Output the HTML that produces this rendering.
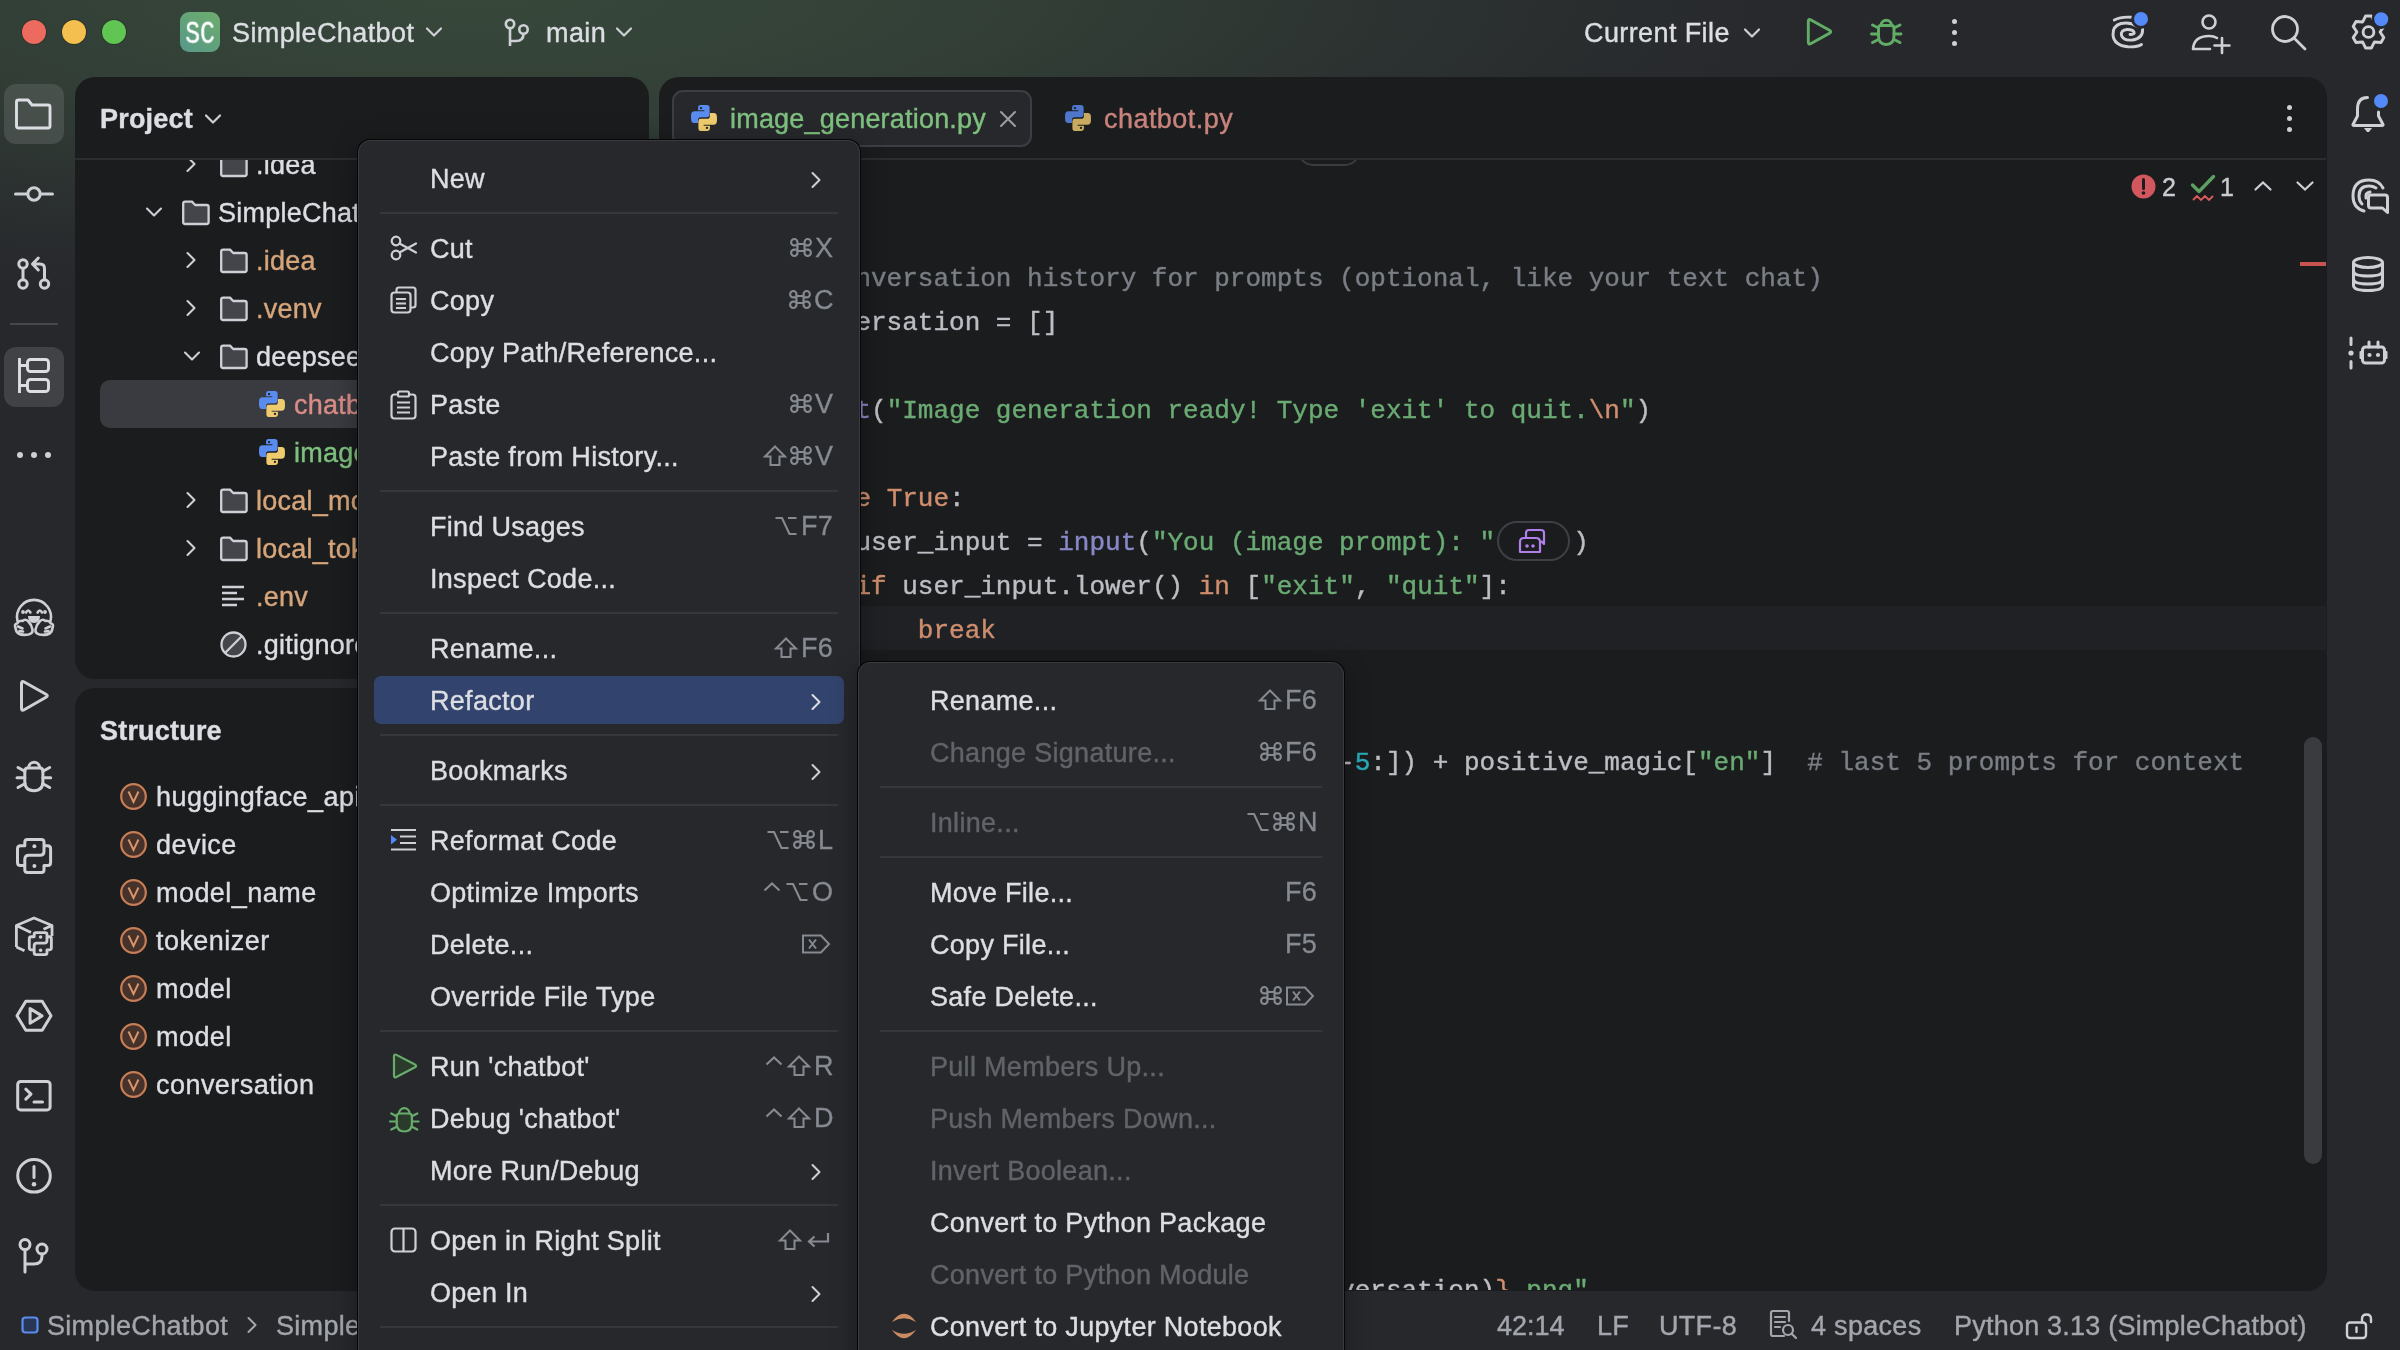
<!DOCTYPE html>
<html><head><meta charset="utf-8">
<style>
*{margin:0;padding:0;box-sizing:border-box}
html,body{width:2400px;height:1350px;overflow:hidden;background:#27282C}
body{position:relative;font-family:"Liberation Sans",sans-serif;color:#DFE1E5;font-size:27px}
.a{position:absolute}
.t{position:absolute;white-space:pre;line-height:1;will-change:transform;-webkit-text-stroke:0.4px currentColor}
.mono{font-family:"Liberation Mono",monospace}
svg{position:absolute;overflow:visible}
.panel{position:absolute;background:#1B1C1E;border-radius:20px;overflow:hidden}
.clip{position:absolute;overflow:hidden}
</style></head>
<body>

<div class="a" style="left:0;top:0;width:1800px;height:700px;background:radial-gradient(ellipse 1350px 300px at 480px 0px,rgba(74,110,76,0.46) 0%,rgba(74,110,76,0.32) 40%,rgba(74,110,76,0.10) 75%,rgba(74,110,76,0) 100%)"></div>
<div class="a" style="left:22px;top:20px;width:24px;height:24px;border-radius:50%;background:#EC6A5E;box-shadow:0 0 0 1px rgba(0,0,0,0.2)"></div>
<div class="a" style="left:62px;top:20px;width:24px;height:24px;border-radius:50%;background:#F4BF4F;box-shadow:0 0 0 1px rgba(0,0,0,0.2)"></div>
<div class="a" style="left:102px;top:20px;width:24px;height:24px;border-radius:50%;background:#61C554;box-shadow:0 0 0 1px rgba(0,0,0,0.2)"></div>
<div class="a" style="left:180px;top:12px;width:40px;height:40px;border-radius:9px;background:linear-gradient(35deg,#56998A 0%,#62A27A 50%,#6EAE6E 100%)"></div>
<div class="t mono" style="left:180px;top:21px;width:40px;text-align:center;font-size:28px;font-weight:400;color:#fff;letter-spacing:0px;transform:scale(0.88,1.14)">SC</div>
<div class="t" style="left:232px;top:19.8px;font-size:27px;font-weight:400;color:#DCDEE3;letter-spacing:0.4px;">SimpleChatbot</div>
<svg style="left:426px;top:27px;" width="16" height="10" viewBox="0 0 16 10"><path d="M1 1.5 L8.0 8.5 L15 1.5" fill="none" stroke="#CED0D6" stroke-width="2.2" stroke-linecap="round" stroke-linejoin="round"/></svg>
<svg style="left:504px;top:18px;" width="26" height="30" viewBox="0 0 26 30"><g fill="none" stroke="#CED0D6" stroke-width="2.6"><circle cx="6" cy="6" r="4.2"/><circle cx="19.5" cy="11.5" r="4.2"/><path d="M6 10.2 V28 M6 23 H12 Q19.5 23 19.5 15.7"/></g></svg>
<div class="t" style="left:546px;top:19.8px;font-size:27px;font-weight:400;color:#DCDEE3;letter-spacing:0.4px;">main</div>
<svg style="left:616px;top:27px;" width="16" height="10" viewBox="0 0 16 10"><path d="M1 1.5 L8.0 8.5 L15 1.5" fill="none" stroke="#CED0D6" stroke-width="2.2" stroke-linecap="round" stroke-linejoin="round"/></svg>
<div class="t" style="left:1584px;top:19.8px;font-size:27px;font-weight:400;color:#DCDEE3;letter-spacing:0.4px;">Current File</div>
<svg style="left:1744px;top:28px;" width="16" height="10" viewBox="0 0 16 10"><path d="M1 1.5 L8.0 8.5 L15 1.5" fill="none" stroke="#CED0D6" stroke-width="2.2" stroke-linecap="round" stroke-linejoin="round"/></svg>
<svg style="left:1804px;top:16px;" width="32" height="32" viewBox="0 0 32 32"><path d="M4.3 5.5 Q4.3 2.5 7 4 L25.5 14.2 Q28 15.7 25.5 17.2 L7 27.6 Q4.3 29.1 4.3 26.1 Z" fill="none" stroke="#62AD66" stroke-width="2.9" stroke-linejoin="round"/></svg>
<svg style="left:1868px;top:14px;" width="36" height="36" viewBox="0 0 36 36"><g fill="none" stroke="#62AD66" stroke-width="2.9" stroke-linecap="round" stroke-linejoin="round"><path d="M13 11.5 A5.3 5.3 0 0 1 23.6 11.5"/><path d="M10.5 14 Q10.5 11.5 13 11.5 H23.5 Q26 11.5 26 14 V22 Q26 30.5 18.25 30.5 Q10.5 30.5 10.5 22 Z"/><path d="M3.5 20 H10.5 M26 20 H33 M4.5 11 L10.5 14 M32 11 L26 14 M4.5 28.5 L10.5 25.5 M32 28.5 L26 25.5"/></g></svg>
<div class="a" style="left:1951.5px;top:18.5px;width:5px;height:5px;border-radius:50%;background:#CED0D6"></div>
<div class="a" style="left:1951.5px;top:29.5px;width:5px;height:5px;border-radius:50%;background:#CED0D6"></div>
<div class="a" style="left:1951.5px;top:40.5px;width:5px;height:5px;border-radius:50%;background:#CED0D6"></div>
<svg style="left:2108px;top:12px;" width="44" height="40" viewBox="0 0 44 40"><g fill="none" stroke="#CED0D6" stroke-width="2.9" stroke-linecap="round"><path d="M28.5 14 Q22 9.8 13 11.5 Q4.5 14 5 23 Q6 33.5 20 34.8 Q29 35.3 33.5 32.5"/><path d="M34.6 17 Q35 26.5 24.5 28 Q15.5 29 13.5 23.5 Q12.5 18 19 17.5 Q24.5 17.3 26 20 Q27 22.5 22 22.5"/><path d="M6.3 8 Q13 4.5 23.5 5.3"/></g><circle cx="33" cy="7" r="8.4" fill="#548AF7" stroke="#27282C" stroke-width="2.8"/></svg>
<svg style="left:2190px;top:12px;" width="42" height="42" viewBox="0 0 42 42"><g fill="none" stroke="#CED0D6" stroke-width="2.6" stroke-linecap="round"><circle cx="19" cy="10" r="6.5"/><path d="M3 37 Q4 24 19 24 Q24 24 27 26 M3 37 H20 M32 26 V41 M24.5 33.5 H39.5"/></g></svg>
<svg style="left:2268px;top:12px;" width="42" height="42" viewBox="0 0 42 42"><g fill="none" stroke="#CED0D6" stroke-width="2.8" stroke-linecap="round"><circle cx="17" cy="17" r="12.5"/><path d="M26 26 L37 37"/></g></svg>
<svg style="left:2348px;top:10px;" width="44" height="44" viewBox="0 0 44 44"><g fill="none" stroke="#CED0D6" stroke-width="2.9" stroke-linejoin="round"><path d="M23.33 38.05 L17.67 38.05 L14.70 32.05 L8.01 32.48 L5.18 27.57 L8.90 22.00 L5.18 16.43 L8.01 11.52 L14.70 11.95 L17.67 5.95 L23.33 5.95 L26.30 11.95 L32.99 11.52 L35.82 16.43 L32.10 22.00 L35.82 27.57 L32.99 32.48 L26.30 32.05 Z"/><circle cx="20.5" cy="22" r="5.4"/></g><circle cx="33.2" cy="9.2" r="8.4" fill="#548AF7" stroke="#27282C" stroke-width="2.8"/></svg>
<div class="a" style="left:4px;top:84px;width:60px;height:60px;border-radius:12px;background:rgba(125,128,128,0.30)"></div>
<svg style="left:14px;top:98px;" width="40" height="34" viewBox="0 0 40 34"><path d="M2.5 4 Q2.5 2 4.5 2 H14 L18 7 H34 Q36 7 36 9 V28 Q36 30 34 30 H4.5 Q2.5 30 2.5 28 Z" fill="none" stroke="#DCDEE3" stroke-width="2.9" stroke-linejoin="round"/></svg>
<svg style="left:12px;top:182px;" width="44" height="24" viewBox="0 0 44 24"><g fill="none" stroke="#CED0D6" stroke-width="3.0" stroke-linecap="round"><circle cx="22" cy="12" r="6.2"/><path d="M3.5 12 H15.8 M28.2 12 H40.5"/></g></svg>
<svg style="left:12px;top:254px;" width="44" height="40" viewBox="0 0 44 40"><g fill="none" stroke="#CED0D6" stroke-width="3.0" stroke-linecap="round" stroke-linejoin="round"><circle cx="11" cy="10" r="4.2"/><circle cx="11" cy="30" r="4.2"/><circle cx="32.5" cy="30" r="4.2"/><path d="M11 14.2 V25.8 M32.5 25.8 V14.5 Q32.5 10 28 10 H20.5 M26.3 4 L20.5 10 L26.3 16"/></g></svg>
<div class="a" style="left:10px;top:323px;width:48px;height:2px;background:#45484C"></div>
<div class="a" style="left:4px;top:347px;width:60px;height:60px;border-radius:12px;background:rgba(125,128,128,0.30)"></div>
<svg style="left:14px;top:354px;" width="40" height="44" viewBox="0 0 40 44"><g fill="none" stroke="#DCDEE3" stroke-width="2.9"><path d="M5.5 4 V39"/><rect x="13.5" y="5.5" width="21" height="12" rx="3"/><rect x="13.5" y="25.5" width="21" height="12" rx="3"/><path d="M5.5 11.5 H13.5 M5.5 31.5 H13.5"/></g></svg>
<div class="a" style="left:17px;top:452px;width:6px;height:6px;border-radius:50%;background:#CED0D6"></div>
<div class="a" style="left:31px;top:452px;width:6px;height:6px;border-radius:50%;background:#CED0D6"></div>
<div class="a" style="left:45px;top:452px;width:6px;height:6px;border-radius:50%;background:#CED0D6"></div>
<svg style="left:12px;top:594px;" width="44" height="44" viewBox="0 0 44 44"><g fill="none" stroke="#CED0D6" stroke-width="2.6" stroke-linecap="round" stroke-linejoin="round"><path d="M5.5 27 A17 17 0 1 1 38.5 27"/><path d="M14 18.5 Q16.2 14.5 18.4 18.5 M25.6 18.5 Q27.8 14.5 30 18.5"/><path d="M3.5 34 Q2 30 5 29.5 Q7.5 26 10.5 27 Q13 24.5 16 27 Q19.5 30.5 20.5 35.5 Q21 39.5 16.5 40.5 Q10 41.5 6.5 39.5 Q4 38 3.5 34 Z M6 32.5 L10.5 34.5 M7.5 37 L11 37.5"/><path d="M40.5 34 Q42 30 39 29.5 Q36.5 26 33.5 27 Q31 24.5 28 27 Q24.5 30.5 23.5 35.5 Q23 39.5 27.5 40.5 Q34 41.5 37.5 39.5 Q40 38 40.5 34 Z M38 32.5 L33.5 34.5 M36.5 37 L33 37.5"/></g><circle cx="11" cy="18" r="1.9" fill="#CED0D6"/><circle cx="33" cy="18" r="1.9" fill="#CED0D6"/><path d="M16 22 H28 Q28 29 22 29 Q16 29 16 22 Z" fill="#CED0D6"/></svg>
<svg style="left:16px;top:676px;" width="36" height="40" viewBox="0 0 36 40"><path d="M5.5 7.5 Q5.5 4.5 8.2 6 L30 18.3 Q32.6 19.8 30 21.3 L8.2 33.8 Q5.5 35.3 5.5 32.3 Z" fill="none" stroke="#CED0D6" stroke-width="3.0" stroke-linejoin="round"/></svg>
<svg style="left:12px;top:754px;" width="44" height="40" viewBox="0 0 44 40"><g fill="none" stroke="#CED0D6" stroke-width="3.0" stroke-linecap="round" stroke-linejoin="round"><path d="M16.7 13 A5.5 5.5 0 0 1 27.6 13"/><path d="M12.8 17 Q12.8 14 15.8 14 H27.9 Q30.9 14 30.9 17 V27.6 Q30.9 36.7 21.85 36.7 Q12.8 36.7 12.8 27.6 Z"/><path d="M5 23.8 H12.8 M30.9 23.8 H38.7 M6 13.5 L12.8 17.3 M37.7 13.5 L30.9 17.3 M6 33.5 L12.8 29.7 M37.7 33.5 L30.9 29.7"/></g></svg>
<svg style="left:16px;top:838px;" width="36" height="36" viewBox="0 0 36 36"><path d="M8.8 7.7 V4.3 Q8.8 1.5 11.6 1.5 H25.2 Q28 1.5 28 4.3 V7.7 H31.6 Q34.6 7.7 34.6 10.7 V24.4 Q34.6 27.4 31.6 27.4 H28 V31.7 Q28 34.5 25.2 34.5 H11.6 Q8.8 34.5 8.8 31.7 V27.4 H4.5 Q1.5 27.4 1.5 24.4 V10.7 Q1.5 7.7 4.5 7.7 Z M8.8 27.4 V21.4 Q8.8 17.3 12.8 17.3 H24 Q28 17.3 28 13.3 V7.7" fill="none" stroke="#CED0D6" stroke-width="3.0" stroke-linejoin="round"/><circle cx="18.4" cy="8.2" r="2" fill="#CED0D6"/><circle cx="18.4" cy="28" r="2" fill="#CED0D6"/></svg>
<svg style="left:14px;top:914px;" width="44" height="44" viewBox="0 0 44 44"><g fill="none" stroke="#CED0D6" stroke-width="2.8" stroke-linejoin="round"><path d="M2.4 33 V11.5 L20 4 L38 11.5 V22 M2.4 11.5 L17 18.5 M38 11.5 L29.5 15.3 M2.4 33 L10.5 36.8"/></g><g transform="translate(14.3 17.6) scale(0.667)"><path d="M8.8 7.7 V4.3 Q8.8 1.5 11.6 1.5 H25.2 Q28 1.5 28 4.3 V7.7 H31.6 Q34.6 7.7 34.6 10.7 V24.4 Q34.6 27.4 31.6 27.4 H28 V31.7 Q28 34.5 25.2 34.5 H11.6 Q8.8 34.5 8.8 31.7 V27.4 H4.5 Q1.5 27.4 1.5 24.4 V10.7 Q1.5 7.7 4.5 7.7 Z M8.8 27.4 V21.4 Q8.8 17.3 12.8 17.3 H24 Q28 17.3 28 13.3 V7.7" fill="#2B2D30" stroke="#CED0D6" stroke-width="4.3" stroke-linejoin="round"/><circle cx="18.4" cy="8.2" r="2.6" fill="#CED0D6"/><circle cx="18.4" cy="28" r="2.6" fill="#CED0D6"/></g></svg>
<svg style="left:12px;top:994px;" width="44" height="44" viewBox="0 0 44 44"><g fill="none" stroke="#CED0D6" stroke-width="3.0" stroke-linejoin="round"><path d="M13.8 7.3 H30.2 L39 21.8 L30.2 36.3 H13.8 L5 21.8 Z"/><path d="M18.1 14.6 V29.2 L30 21.9 Z"/></g></svg>
<svg style="left:14px;top:1076px;" width="42" height="40" viewBox="0 0 42 40"><g fill="none" stroke="#CED0D6" stroke-width="3.0" stroke-linecap="round" stroke-linejoin="round"><rect x="3.7" y="5.5" width="32.4" height="28.4" rx="3"/><path d="M11.8 13.2 L17 18.2 L11.8 23.2 M20 26 H28.5"/></g></svg>
<svg style="left:14px;top:1155px;" width="40" height="42" viewBox="0 0 40 42"><g fill="none" stroke="#CED0D6" stroke-width="3.0" stroke-linecap="round"><circle cx="20" cy="20.8" r="16.3"/><path d="M20 11.5 V22.5"/></g><circle cx="20" cy="29.3" r="2.3" fill="#CED0D6"/></svg>
<svg style="left:14px;top:1234px;" width="40" height="42" viewBox="0 0 40 42"><g fill="none" stroke="#CED0D6" stroke-width="3.0" stroke-linecap="round"><circle cx="11" cy="10.6" r="5"/><circle cx="28" cy="15" r="5"/><path d="M11 15.6 V38 M11 30 H20 Q28 30 28 22 V20"/></g></svg>
<svg style="left:2346px;top:92px;" width="46" height="44" viewBox="0 0 46 44"><g fill="none" stroke="#CED0D6" stroke-width="3.0" stroke-linejoin="round" stroke-linecap="round"><path d="M21.5 5.5 Q11.5 5.5 11.5 17 V24 L7 32.5 Q6.5 33.5 8 33.5 H36 Q37.5 33.5 37 32.5 L32.5 24 V20"/></g><path d="M18 36 H26 L23 40 H21 Z" fill="#CED0D6"/><circle cx="35" cy="9" r="7" fill="#548AF7"/></svg>
<svg style="left:2350px;top:174px;" width="42" height="44" viewBox="0 0 42 44"><g fill="none" stroke="#CED0D6" stroke-width="3.0" stroke-linecap="round" stroke-linejoin="round"><path d="M14 37 Q3 34 3 22 Q3 6 19 6 Q29 6 33 14"/><path d="M12 30 Q9 27 9 22 Q9 12 19 12 Q23 12 26 14"/><path d="M16 24 Q15 19 20 18"/><path d="M21 21 H35 Q37.5 21 37.5 23.5 V38.5 L32.5 34 H21 Q18.5 34 18.5 31.5 V23.5 Q18.5 21 21 21 Z"/></g></svg>
<svg style="left:2348px;top:254px;" width="40" height="40" viewBox="0 0 40 40"><g fill="none" stroke="#CED0D6" stroke-width="3.0"><ellipse cx="20" cy="8.5" rx="14.5" ry="5"/><path d="M5.5 8.5 V31.5 Q5.5 36.5 20 36.5 Q34.5 36.5 34.5 31.5 V8.5 M5.5 17 Q5.5 22 20 22 Q34.5 22 34.5 17 M5.5 25 Q5.5 30 20 30 Q34.5 30 34.5 25"/></g></svg>
<svg style="left:2348px;top:334px;" width="44" height="40" viewBox="0 0 44 40"><g fill="none" stroke="#CED0D6" stroke-width="3.0" stroke-linecap="round"><path d="M3 4 V10.5 M3 27.5 V34"/><rect x="14.5" y="13" width="22" height="16" rx="3"/><path d="M21 13 V8 M30 13 V8"/></g><rect x="11.5" y="17" width="3.5" height="8" rx="1" fill="#CED0D6"/><rect x="36" y="17" width="3.5" height="8" rx="1" fill="#CED0D6"/><circle cx="3" cy="19" r="2.6" fill="#CED0D6"/><circle cx="21.5" cy="21" r="2.1" fill="#CED0D6"/><circle cx="30" cy="21" r="2.1" fill="#CED0D6"/></svg>
<div class="panel" style="left:75px;top:77px;width:574px;height:602px"></div>
<div class="t" style="left:100px;top:106.3px;font-size:27px;font-weight:700;color:#DCDEE3;letter-spacing:0.2px;">Project</div>
<svg style="left:205px;top:114px;" width="16" height="10" viewBox="0 0 16 10"><path d="M1 1.5 L8.0 8.5 L15 1.5" fill="none" stroke="#CED0D6" stroke-width="2.2" stroke-linecap="round" stroke-linejoin="round"/></svg>
<div class="a" style="left:75px;top:158px;width:574px;height:2px;background:#2B2D30"></div>
<div class="clip" style="left:75px;top:160px;width:574px;height:519px">
<div class="a" style="left:25px;top:220px;width:600px;height:48px;border-radius:10px;background:#393B40"></div>
<svg style="left:111px;top:-4px" width="10" height="16" viewBox="0 0 10 16"><path d="M1.5 1 L8.5 8 L1.5 15" fill="none" stroke="#CED0D6" stroke-width="2.1" stroke-linecap="round" stroke-linejoin="round"/></svg>
<svg style="left:144px;top:-8px" width="30" height="26" viewBox="0 0 30 26"><path d="M2.2 3.5 Q2.2 1.6 4.1 1.6 H11 L14.2 5 H25.6 Q27.6 5 27.6 7 V22 Q27.6 24 25.6 24 H4.2 Q2.2 24 2.2 22 Z" fill="#43454A" stroke="#CED0D6" stroke-width="2.3" stroke-linejoin="round"/></svg>
<div class="t" style="left:181px;top:-8.2px;color:#DCDEE3;letter-spacing:0.25px;font-weight:400">.idea</div>
<svg style="left:71px;top:47px" width="16" height="10" viewBox="0 0 16 10"><path d="M1 1.5 L8 8.5 L15 1.5" fill="none" stroke="#CED0D6" stroke-width="2.1" stroke-linecap="round" stroke-linejoin="round"/></svg>
<svg style="left:106px;top:40px" width="30" height="26" viewBox="0 0 30 26"><path d="M2.2 3.5 Q2.2 1.6 4.1 1.6 H11 L14.2 5 H25.6 Q27.6 5 27.6 7 V22 Q27.6 24 25.6 24 H4.2 Q2.2 24 2.2 22 Z" fill="#43454A" stroke="#CED0D6" stroke-width="2.3" stroke-linejoin="round"/></svg>
<div class="t" style="left:143px;top:39.8px;color:#DCDEE3;letter-spacing:0.25px;font-weight:400">SimpleChatbot</div>
<svg style="left:111px;top:92px" width="10" height="16" viewBox="0 0 10 16"><path d="M1.5 1 L8.5 8 L1.5 15" fill="none" stroke="#CED0D6" stroke-width="2.1" stroke-linecap="round" stroke-linejoin="round"/></svg>
<svg style="left:144px;top:88px" width="30" height="26" viewBox="0 0 30 26"><path d="M2.2 3.5 Q2.2 1.6 4.1 1.6 H11 L14.2 5 H25.6 Q27.6 5 27.6 7 V22 Q27.6 24 25.6 24 H4.2 Q2.2 24 2.2 22 Z" fill="#43454A" stroke="#CED0D6" stroke-width="2.3" stroke-linejoin="round"/></svg>
<div class="t" style="left:181px;top:87.8px;color:#D6A57A;letter-spacing:0.25px;font-weight:400">.idea</div>
<svg style="left:111px;top:140px" width="10" height="16" viewBox="0 0 10 16"><path d="M1.5 1 L8.5 8 L1.5 15" fill="none" stroke="#CED0D6" stroke-width="2.1" stroke-linecap="round" stroke-linejoin="round"/></svg>
<svg style="left:144px;top:136px" width="30" height="26" viewBox="0 0 30 26"><path d="M2.2 3.5 Q2.2 1.6 4.1 1.6 H11 L14.2 5 H25.6 Q27.6 5 27.6 7 V22 Q27.6 24 25.6 24 H4.2 Q2.2 24 2.2 22 Z" fill="#43454A" stroke="#CED0D6" stroke-width="2.3" stroke-linejoin="round"/></svg>
<div class="t" style="left:181px;top:135.8px;color:#D6A57A;letter-spacing:0.25px;font-weight:400">.venv</div>
<svg style="left:109px;top:191px" width="16" height="10" viewBox="0 0 16 10"><path d="M1 1.5 L8 8.5 L15 1.5" fill="none" stroke="#CED0D6" stroke-width="2.1" stroke-linecap="round" stroke-linejoin="round"/></svg>
<svg style="left:144px;top:184px" width="30" height="26" viewBox="0 0 30 26"><path d="M2.2 3.5 Q2.2 1.6 4.1 1.6 H11 L14.2 5 H25.6 Q27.6 5 27.6 7 V22 Q27.6 24 25.6 24 H4.2 Q2.2 24 2.2 22 Z" fill="#43454A" stroke="#CED0D6" stroke-width="2.3" stroke-linejoin="round"/></svg>
<div class="t" style="left:181px;top:183.8px;color:#DCDEE3;letter-spacing:0.25px;font-weight:400">deepseek</div>
<svg style="left:183px;top:230px" width="28" height="28" viewBox="0 0 16 16"><path d="M6 0.6 H9.6 Q11.2 0.6 11.2 2.2 V6.2 Q11.2 7.6 9.8 7.6 H6.2 Q4.6 7.6 4.6 9.2 V10.8 H2.4 Q0.6 10.8 0.6 8.4 V6.6 Q0.6 4.2 2.6 4.2 H8.2 V3.6 H4.6 V2.0 Q4.6 0.6 6 0.6 Z" fill="#5A8CF0"/><path d="M6 0.6 H9.6 Q11.2 0.6 11.2 2.2 V6.2 Q11.2 7.6 9.8 7.6 H6.2 Q4.6 7.6 4.6 9.2 V10.8 H2.4 Q0.6 10.8 0.6 8.4 V6.6 Q0.6 4.2 2.6 4.2 H8.2 V3.6 H4.6 V2.0 Q4.6 0.6 6 0.6 Z" fill="#EECB6E" transform="rotate(180 8 8)"/><circle cx="6.3" cy="2.3" r="0.65" fill="#1B1C1E"/><circle cx="9.7" cy="13.7" r="0.65" fill="#1B1C1E"/></svg>
<div class="t" style="left:219px;top:231.8px;color:#DA8C86;letter-spacing:0.25px;font-weight:400">chatbot.py</div>
<svg style="left:183px;top:278px" width="28" height="28" viewBox="0 0 16 16"><path d="M6 0.6 H9.6 Q11.2 0.6 11.2 2.2 V6.2 Q11.2 7.6 9.8 7.6 H6.2 Q4.6 7.6 4.6 9.2 V10.8 H2.4 Q0.6 10.8 0.6 8.4 V6.6 Q0.6 4.2 2.6 4.2 H8.2 V3.6 H4.6 V2.0 Q4.6 0.6 6 0.6 Z" fill="#5A8CF0"/><path d="M6 0.6 H9.6 Q11.2 0.6 11.2 2.2 V6.2 Q11.2 7.6 9.8 7.6 H6.2 Q4.6 7.6 4.6 9.2 V10.8 H2.4 Q0.6 10.8 0.6 8.4 V6.6 Q0.6 4.2 2.6 4.2 H8.2 V3.6 H4.6 V2.0 Q4.6 0.6 6 0.6 Z" fill="#EECB6E" transform="rotate(180 8 8)"/><circle cx="6.3" cy="2.3" r="0.65" fill="#1B1C1E"/><circle cx="9.7" cy="13.7" r="0.65" fill="#1B1C1E"/></svg>
<div class="t" style="left:219px;top:279.8px;color:#7EC07F;letter-spacing:0.25px;font-weight:400">image_generation.py</div>
<svg style="left:111px;top:332px" width="10" height="16" viewBox="0 0 10 16"><path d="M1.5 1 L8.5 8 L1.5 15" fill="none" stroke="#CED0D6" stroke-width="2.1" stroke-linecap="round" stroke-linejoin="round"/></svg>
<svg style="left:144px;top:328px" width="30" height="26" viewBox="0 0 30 26"><path d="M2.2 3.5 Q2.2 1.6 4.1 1.6 H11 L14.2 5 H25.6 Q27.6 5 27.6 7 V22 Q27.6 24 25.6 24 H4.2 Q2.2 24 2.2 22 Z" fill="#43454A" stroke="#CED0D6" stroke-width="2.3" stroke-linejoin="round"/></svg>
<div class="t" style="left:181px;top:327.8px;color:#D6A57A;letter-spacing:0.25px;font-weight:400">local_model</div>
<svg style="left:111px;top:380px" width="10" height="16" viewBox="0 0 10 16"><path d="M1.5 1 L8.5 8 L1.5 15" fill="none" stroke="#CED0D6" stroke-width="2.1" stroke-linecap="round" stroke-linejoin="round"/></svg>
<svg style="left:144px;top:376px" width="30" height="26" viewBox="0 0 30 26"><path d="M2.2 3.5 Q2.2 1.6 4.1 1.6 H11 L14.2 5 H25.6 Q27.6 5 27.6 7 V22 Q27.6 24 25.6 24 H4.2 Q2.2 24 2.2 22 Z" fill="#43454A" stroke="#CED0D6" stroke-width="2.3" stroke-linejoin="round"/></svg>
<div class="t" style="left:181px;top:375.8px;color:#D6A57A;letter-spacing:0.25px;font-weight:400">local_tokenizer</div>
<svg style="left:145px;top:422px" width="28" height="28" viewBox="0 0 28 28"><g stroke="#CED0D6" stroke-width="2.3"><path d="M2 5 H24 M2 11 H17 M2 17 H24 M2 23 H17"/></g></svg>
<div class="t" style="left:181px;top:423.8px;color:#D6A57A;letter-spacing:0.25px;font-weight:400">.env</div>
<svg style="left:144px;top:470px" width="30" height="30" viewBox="0 0 30 30"><circle cx="14.5" cy="14.5" r="12" fill="#43454A" stroke="#CED0D6" stroke-width="2.3"/><path d="M6 23 L23 6" stroke="#CED0D6" stroke-width="2.3"/></svg>
<div class="t" style="left:181px;top:471.8px;color:#DCDEE3;letter-spacing:0.25px;font-weight:400">.gitignore</div>
</div>
<div class="panel" style="left:75px;top:688px;width:574px;height:603px"></div>
<div class="t" style="left:100px;top:717.8px;font-size:27px;font-weight:700;color:#DCDEE3;letter-spacing:0.2px;">Structure</div>
<svg style="left:119px;top:782px;" width="30" height="30" viewBox="0 0 30 30"><circle cx="14.5" cy="14.5" r="12.3" fill="#45322A" stroke="#C77D55" stroke-width="2.2"/><path d="M9.5 9.5 L14.5 20 L19.5 9.5" fill="none" stroke="#D9956A" stroke-width="2"/></svg>
<div class="t" style="left:156px;top:783.8px;font-size:27px;font-weight:400;color:#DCDEE3;letter-spacing:0.45px;">huggingface_api_key</div>
<svg style="left:119px;top:830px;" width="30" height="30" viewBox="0 0 30 30"><circle cx="14.5" cy="14.5" r="12.3" fill="#45322A" stroke="#C77D55" stroke-width="2.2"/><path d="M9.5 9.5 L14.5 20 L19.5 9.5" fill="none" stroke="#D9956A" stroke-width="2"/></svg>
<div class="t" style="left:156px;top:831.8px;font-size:27px;font-weight:400;color:#DCDEE3;letter-spacing:0.45px;">device</div>
<svg style="left:119px;top:878px;" width="30" height="30" viewBox="0 0 30 30"><circle cx="14.5" cy="14.5" r="12.3" fill="#45322A" stroke="#C77D55" stroke-width="2.2"/><path d="M9.5 9.5 L14.5 20 L19.5 9.5" fill="none" stroke="#D9956A" stroke-width="2"/></svg>
<div class="t" style="left:156px;top:879.8px;font-size:27px;font-weight:400;color:#DCDEE3;letter-spacing:0.45px;">model_name</div>
<svg style="left:119px;top:926px;" width="30" height="30" viewBox="0 0 30 30"><circle cx="14.5" cy="14.5" r="12.3" fill="#45322A" stroke="#C77D55" stroke-width="2.2"/><path d="M9.5 9.5 L14.5 20 L19.5 9.5" fill="none" stroke="#D9956A" stroke-width="2"/></svg>
<div class="t" style="left:156px;top:927.8px;font-size:27px;font-weight:400;color:#DCDEE3;letter-spacing:0.45px;">tokenizer</div>
<svg style="left:119px;top:974px;" width="30" height="30" viewBox="0 0 30 30"><circle cx="14.5" cy="14.5" r="12.3" fill="#45322A" stroke="#C77D55" stroke-width="2.2"/><path d="M9.5 9.5 L14.5 20 L19.5 9.5" fill="none" stroke="#D9956A" stroke-width="2"/></svg>
<div class="t" style="left:156px;top:975.8px;font-size:27px;font-weight:400;color:#DCDEE3;letter-spacing:0.45px;">model</div>
<svg style="left:119px;top:1022px;" width="30" height="30" viewBox="0 0 30 30"><circle cx="14.5" cy="14.5" r="12.3" fill="#45322A" stroke="#C77D55" stroke-width="2.2"/><path d="M9.5 9.5 L14.5 20 L19.5 9.5" fill="none" stroke="#D9956A" stroke-width="2"/></svg>
<div class="t" style="left:156px;top:1023.8px;font-size:27px;font-weight:400;color:#DCDEE3;letter-spacing:0.45px;">model</div>
<svg style="left:119px;top:1070px;" width="30" height="30" viewBox="0 0 30 30"><circle cx="14.5" cy="14.5" r="12.3" fill="#45322A" stroke="#C77D55" stroke-width="2.2"/><path d="M9.5 9.5 L14.5 20 L19.5 9.5" fill="none" stroke="#D9956A" stroke-width="2"/></svg>
<div class="t" style="left:156px;top:1071.8px;font-size:27px;font-weight:400;color:#DCDEE3;letter-spacing:0.45px;">conversation</div>
<div class="panel" style="left:659px;top:77px;width:1668px;height:1214px"></div>
<div class="a" style="left:672px;top:90px;width:360px;height:57px;border-radius:11px;background:#27282C;border:2px solid #3C3E43"></div>
<svg style="left:690px;top:104px" width="28" height="28" viewBox="0 0 16 16"><path d="M6 0.6 H9.6 Q11.2 0.6 11.2 2.2 V6.2 Q11.2 7.6 9.8 7.6 H6.2 Q4.6 7.6 4.6 9.2 V10.8 H2.4 Q0.6 10.8 0.6 8.4 V6.6 Q0.6 4.2 2.6 4.2 H8.2 V3.6 H4.6 V2.0 Q4.6 0.6 6 0.6 Z" fill="#5A8CF0"/><path d="M6 0.6 H9.6 Q11.2 0.6 11.2 2.2 V6.2 Q11.2 7.6 9.8 7.6 H6.2 Q4.6 7.6 4.6 9.2 V10.8 H2.4 Q0.6 10.8 0.6 8.4 V6.6 Q0.6 4.2 2.6 4.2 H8.2 V3.6 H4.6 V2.0 Q4.6 0.6 6 0.6 Z" fill="#EECB6E" transform="rotate(180 8 8)"/><circle cx="6.3" cy="2.3" r="0.65" fill="#1B1C1E"/><circle cx="9.7" cy="13.7" r="0.65" fill="#1B1C1E"/></svg>
<div class="t" style="left:730px;top:105.8px;font-size:27px;font-weight:400;color:#7EC07F;letter-spacing:0.2px;">image_generation.py</div>
<svg style="left:999px;top:110px;" width="18" height="18" viewBox="0 0 18 18"><path d="M2 2 L16 16 M16 2 L2 16" stroke="#9A9DA3" stroke-width="2" stroke-linecap="round"/></svg>
<div class="a" style="left:1064px;top:104px;width:28px;height:28px;opacity:0.82">
<svg style="left:0px;top:0px" width="28" height="28" viewBox="0 0 16 16"><path d="M6 0.6 H9.6 Q11.2 0.6 11.2 2.2 V6.2 Q11.2 7.6 9.8 7.6 H6.2 Q4.6 7.6 4.6 9.2 V10.8 H2.4 Q0.6 10.8 0.6 8.4 V6.6 Q0.6 4.2 2.6 4.2 H8.2 V3.6 H4.6 V2.0 Q4.6 0.6 6 0.6 Z" fill="#5A8CF0"/><path d="M6 0.6 H9.6 Q11.2 0.6 11.2 2.2 V6.2 Q11.2 7.6 9.8 7.6 H6.2 Q4.6 7.6 4.6 9.2 V10.8 H2.4 Q0.6 10.8 0.6 8.4 V6.6 Q0.6 4.2 2.6 4.2 H8.2 V3.6 H4.6 V2.0 Q4.6 0.6 6 0.6 Z" fill="#EECB6E" transform="rotate(180 8 8)"/><circle cx="6.3" cy="2.3" r="0.65" fill="#1B1C1E"/><circle cx="9.7" cy="13.7" r="0.65" fill="#1B1C1E"/></svg>
</div>
<div class="t" style="left:1104px;top:105.8px;font-size:27px;font-weight:400;color:#C8847C;letter-spacing:0.45px;">chatbot.py</div>
<div class="a" style="left:2287px;top:104.5px;width:5px;height:5px;border-radius:50%;background:#CED0D6"></div>
<div class="a" style="left:2287px;top:115.5px;width:5px;height:5px;border-radius:50%;background:#CED0D6"></div>
<div class="a" style="left:2287px;top:126.5px;width:5px;height:5px;border-radius:50%;background:#CED0D6"></div>
<div class="a" style="left:659px;top:158px;width:1667px;height:2px;background:#2B2D30"></div>
<div class="clip" style="left:1290px;top:160px;width:80px;height:10px"><div class="a" style="left:8px;top:-24px;width:62px;height:30px;border-radius:15px;border:2px solid #3A3C40;background:#1B1C1E"></div></div>
<div class="a" style="left:659px;top:158px;width:1667px;height:2px;background:#2B2D30"></div>
<div class="a" style="left:659px;top:606px;width:1667px;height:44px;background:#202125"></div>
<div class="clip" style="left:659px;top:160px;width:1640px;height:1130px">
<div class="a" style="left:-659px;top:-160px;width:2400px;height:1350px">
<div class="t mono" style="left:793.2px;top:266.0px;font-size:26px;color:#BCBEC4"><span style="color:#7A7E85"># Conversation history for prompts (optional, like your text chat)</span></div>
<div class="t mono" style="left:793.2px;top:310.0px;font-size:26px;color:#BCBEC4"><span style="color:#BCBEC4">conversation = []</span></div>
<div class="t mono" style="left:793.2px;top:398.0px;font-size:26px;color:#BCBEC4"><span style="color:#8888C6">print</span><span style="color:#BCBEC4">(</span><span style="color:#6AAB73">&quot;Image generation ready! Type &#x27;exit&#x27; to quit.</span><span style="color:#CF8E6D">\n</span><span style="color:#6AAB73">&quot;</span><span style="color:#BCBEC4">)</span></div>
<div class="t mono" style="left:793.2px;top:486.0px;font-size:26px;color:#BCBEC4"><span style="color:#CF8E6D">while </span><span style="color:#CF8E6D">True</span><span style="color:#BCBEC4">:</span></div>
<div class="t mono" style="left:793.2px;top:530.0px;font-size:26px;color:#BCBEC4"><span style="color:#BCBEC4">    user_input = </span><span style="color:#8888C6">input</span><span style="color:#BCBEC4">(</span><span style="color:#6AAB73">&quot;You (image prompt): &quot;</span><span style="color:#BCBEC4">     </span><span style="color:#BCBEC4">)</span></div>
<div class="t mono" style="left:793.2px;top:574.0px;font-size:26px;color:#BCBEC4"><span style="color:#BCBEC4">    </span><span style="color:#CF8E6D">if</span><span style="color:#BCBEC4"> user_input.lower() </span><span style="color:#CF8E6D">in</span><span style="color:#BCBEC4"> [</span><span style="color:#6AAB73">&quot;exit&quot;</span><span style="color:#BCBEC4">, </span><span style="color:#6AAB73">&quot;quit&quot;</span><span style="color:#BCBEC4">]:</span></div>
<div class="t mono" style="left:793.2px;top:618.0px;font-size:26px;color:#BCBEC4"><span style="color:#BCBEC4">        </span><span style="color:#CF8E6D">break</span></div>
<div class="t mono" style="left:793.2px;top:706.0px;font-size:26px;color:#BCBEC4"><span style="color:#BCBEC4">    conversation.append(user_input)</span></div>
<div class="t mono" style="left:793.2px;top:750.0px;font-size:26px;color:#BCBEC4"><span style="color:#BCBEC4">    prompt = </span><span style="color:#6AAB73">&quot; &quot;</span><span style="color:#BCBEC4">.join(conversation[-</span><span style="color:#2AACB8">5</span><span style="color:#BCBEC4">:]) + positive_magic[</span><span style="color:#6AAB73">&quot;en&quot;</span><span style="color:#BCBEC4">]  </span><span style="color:#7A7E85"># last 5 prompts for context</span></div>
<div class="t mono" style="left:793.2px;top:1278.0px;font-size:26px;color:#BCBEC4"><span style="color:#BCBEC4">        filename = </span><span style="color:#6AAB73">f&quot;image_</span><span style="color:#CF8E6D">{</span><span style="color:#8888C6">len</span><span style="color:#BCBEC4">(conversation)</span><span style="color:#CF8E6D">}</span><span style="color:#6AAB73">.png&quot;</span></div>
</div></div>
<div class="a" style="left:1497px;top:521px;width:73px;height:40px;border-radius:20px;border:2px solid #3E4045"></div>
<svg style="left:1517px;top:527px;" width="30" height="28" viewBox="0 0 30 28"><g fill="none" stroke="#B07FEA" stroke-width="2.2" stroke-linejoin="round"><path d="M3 25 V15 Q3 11 7 11 H19 Q23 11 23 15 V25 Z"/><path d="M9 11 V6 Q9 3 12 3 H24 Q27 3 27 6 V17 L24 14"/></g><circle cx="10" cy="19" r="1.8" fill="#B07FEA"/><circle cx="16" cy="19" r="1.8" fill="#B07FEA"/></svg>
<svg style="left:2131px;top:174px;" width="26" height="26" viewBox="0 0 26 26"><circle cx="12.5" cy="12.5" r="12" fill="#D2575E"/><path d="M12.5 5.5 V14.5" stroke="#1B1C1E" stroke-width="3" stroke-linecap="round"/><circle cx="12.5" cy="19" r="1.8" fill="#1B1C1E"/></svg>
<div class="t" style="left:2162px;top:174.7px;font-size:25px;font-weight:400;color:#C9CCD1;letter-spacing:0px;">2</div>
<svg style="left:2190px;top:172px;" width="28" height="30" viewBox="0 0 28 30"><path d="M2.5 13 L9 19.5 L23.5 4.5" fill="none" stroke="#5E9F62" stroke-width="3.4" stroke-linecap="round" stroke-linejoin="round"/><path d="M3 28 L7 24 L11 28 L15 24 L19 28 L23 24" fill="none" stroke="#DB5C5C" stroke-width="1.8"/></svg>
<div class="t" style="left:2220px;top:174.7px;font-size:25px;font-weight:400;color:#C9CCD1;letter-spacing:0px;">1</div>
<svg style="left:2254px;top:181px;" width="18" height="10" viewBox="0 0 18 10"><path d="M1.5 8.5 L9 1.5 L16.5 8.5" fill="none" stroke="#CED0D6" stroke-width="2.2" stroke-linecap="round"/></svg>
<svg style="left:2296px;top:181px;" width="18" height="10" viewBox="0 0 18 10"><path d="M1.5 1.5 L9 8.5 L16.5 1.5" fill="none" stroke="#CED0D6" stroke-width="2.2" stroke-linecap="round"/></svg>
<div class="a" style="left:2300px;top:262px;width:26px;height:4px;background:#C75450"></div>
<div class="a" style="left:2304px;top:737px;width:18px;height:427px;border-radius:9px;background:#3A3B3F"></div>
<svg style="left:21px;top:1316px;" width="18" height="18" viewBox="0 0 18 18"><rect x="1.5" y="1.5" width="15" height="15" rx="3" fill="#2A3656" stroke="#5A8CF0" stroke-width="2.2"/></svg>
<div class="t" style="left:47px;top:1312.8px;font-size:27px;font-weight:400;color:#A3A6AD;letter-spacing:0.3px;">SimpleChatbot</div>
<svg style="left:247px;top:1317px;" width="10" height="16" viewBox="0 0 10 16"><path d="M1.5 1 L8.5 8.0 L1.5 15" fill="none" stroke="#A3A6AD" stroke-width="2" stroke-linecap="round" stroke-linejoin="round"/></svg>
<div class="t" style="left:276px;top:1312.8px;font-size:27px;font-weight:400;color:#A3A6AD;letter-spacing:0.3px;">SimpleChatbot</div>
<div class="t" style="left:1497px;top:1312.8px;font-size:27px;font-weight:400;color:#A3A6AD;letter-spacing:0px;">42:14</div>
<div class="t" style="left:1597px;top:1312.8px;font-size:27px;font-weight:400;color:#A3A6AD;letter-spacing:0.3px;">LF</div>
<div class="t" style="left:1659px;top:1312.8px;font-size:27px;font-weight:400;color:#A3A6AD;letter-spacing:0.3px;">UTF-8</div>
<svg style="left:1768px;top:1309px;" width="32" height="32" viewBox="0 0 32 32"><g fill="none" stroke="#A3A6AD" stroke-width="2.2" stroke-linecap="round"><path d="M16 27 H5 Q3 27 3 25 V4 Q3 2 5 2 H19 Q21 2 21 4 V12"/><path d="M7 8 H17 M7 13 H17 M7 18 H12"/><circle cx="20" cy="21" r="5"/><path d="M23.5 24.5 L28 29"/></g></svg>
<div class="t" style="left:1811px;top:1312.8px;font-size:27px;font-weight:400;color:#A3A6AD;letter-spacing:0.3px;">4 spaces</div>
<div class="t" style="left:1954px;top:1312.8px;font-size:27px;font-weight:400;color:#A3A6AD;letter-spacing:0.22px;">Python 3.13 (SimpleChatbot)</div>
<svg style="left:2343px;top:1308px;" width="34" height="32" viewBox="0 0 34 32"><g fill="none" stroke="#CED0D6" stroke-width="2.4" stroke-linejoin="round" stroke-linecap="round"><rect x="4" y="14.5" width="19" height="15.5" rx="3"/><path d="M19 14.5 V11 Q19 6.5 23.5 6.5 Q28 6.5 28 11 V14"/><path d="M13.5 19.5 V24"/></g></svg>
<div class="a" style="left:357px;top:139px;width:504px;height:1261px;border-radius:13px;background:#060607;box-shadow:0 6px 24px rgba(0,0,0,0.35)"></div>
<div class="a" style="left:358px;top:140px;width:502px;height:1259px;border-radius:12px;background:#27282C;border:1px solid #3A3B40"></div>
<div class="a" style="left:374px;top:676px;width:470px;height:48px;border-radius:7px;background:#32436D"></div>
<div class="t" style="left:430px;top:165.8px;font-size:27px;font-weight:400;color:#DCDEE3;letter-spacing:0.3px;">New</div>
<svg style="left:811px;top:171.5px;" width="10" height="16" viewBox="0 0 10 16"><path d="M1.5 1 L8.5 8.0 L1.5 15" fill="none" stroke="#CED0D6" stroke-width="2.0" stroke-linecap="round" stroke-linejoin="round"/></svg>
<div class="a" style="left:380px;top:212px;width:458px;height:2px;background:#35373B"></div>
<div class="t" style="left:430px;top:235.8px;font-size:27px;font-weight:400;color:#DCDEE3;letter-spacing:0.3px;">Cut</div>
<div class="a" style="right:1566.5px;top:237px;height:22px;display:flex;gap:3px;align-items:center;color:#868A91;white-space:pre;will-change:transform"><svg style="position:static;display:block" width="22" height="22" viewBox="0 0 22 22"><g fill="none" stroke="#868A91" stroke-width="2.1"><path d="M7.5 7 H14.5 V14 H7.5 Z"/><path d="M7.5 7 V5.2 A3.2 3.2 0 1 0 4.3 8.4 H7.5"/><path d="M14.5 7 V5.2 A3.2 3.2 0 1 1 17.7 8.4 H14.5"/><path d="M7.5 14 V15.8 A3.2 3.2 0 1 1 4.3 12.6 H7.5"/><path d="M14.5 14 V15.8 A3.2 3.2 0 1 0 17.7 12.6 H14.5"/></g></svg><span style="display:block;font-size:27px;line-height:22px;letter-spacing:0.3px;-webkit-text-stroke:0.3px currentColor">X</span></div>
<svg style="left:390px;top:235px;" width="28" height="26" viewBox="0 0 28 26"><g fill="none" stroke="#CED0D6" stroke-width="2.2" stroke-linecap="round"><circle cx="6" cy="6" r="4.3"/><circle cx="6" cy="20" r="4.3"/><path d="M9.5 8.5 L26 17.5 M9.5 17.5 L26 8.5"/></g></svg>
<div class="t" style="left:430px;top:287.8px;font-size:27px;font-weight:400;color:#DCDEE3;letter-spacing:0.3px;">Copy</div>
<div class="a" style="right:1566.5px;top:289px;height:22px;display:flex;gap:3px;align-items:center;color:#868A91;white-space:pre;will-change:transform"><svg style="position:static;display:block" width="22" height="22" viewBox="0 0 22 22"><g fill="none" stroke="#868A91" stroke-width="2.1"><path d="M7.5 7 H14.5 V14 H7.5 Z"/><path d="M7.5 7 V5.2 A3.2 3.2 0 1 0 4.3 8.4 H7.5"/><path d="M14.5 7 V5.2 A3.2 3.2 0 1 1 17.7 8.4 H14.5"/><path d="M7.5 14 V15.8 A3.2 3.2 0 1 1 4.3 12.6 H7.5"/><path d="M14.5 14 V15.8 A3.2 3.2 0 1 0 17.7 12.6 H14.5"/></g></svg><span style="display:block;font-size:27px;line-height:22px;letter-spacing:0.3px;-webkit-text-stroke:0.3px currentColor">C</span></div>
<svg style="left:390px;top:286px;" width="28" height="28" viewBox="0 0 28 28"><g fill="none" stroke="#CED0D6" stroke-width="2.2" stroke-linejoin="round"><rect x="1.5" y="6.5" width="19" height="20" rx="3"/><path d="M6.5 6.5 V4 Q6.5 1.5 9 1.5 H23 Q25.5 1.5 25.5 4 V19 Q25.5 21.5 23 21.5 H20.5"/><path d="M6 13 H16 M6 17.5 H16 M6 22 H16"/></g></svg>
<div class="t" style="left:430px;top:339.8px;font-size:27px;font-weight:400;color:#DCDEE3;letter-spacing:0.3px;">Copy Path/Reference...</div>
<div class="t" style="left:430px;top:391.8px;font-size:27px;font-weight:400;color:#DCDEE3;letter-spacing:0.3px;">Paste</div>
<div class="a" style="right:1566.5px;top:393px;height:22px;display:flex;gap:3px;align-items:center;color:#868A91;white-space:pre;will-change:transform"><svg style="position:static;display:block" width="22" height="22" viewBox="0 0 22 22"><g fill="none" stroke="#868A91" stroke-width="2.1"><path d="M7.5 7 H14.5 V14 H7.5 Z"/><path d="M7.5 7 V5.2 A3.2 3.2 0 1 0 4.3 8.4 H7.5"/><path d="M14.5 7 V5.2 A3.2 3.2 0 1 1 17.7 8.4 H14.5"/><path d="M7.5 14 V15.8 A3.2 3.2 0 1 1 4.3 12.6 H7.5"/><path d="M14.5 14 V15.8 A3.2 3.2 0 1 0 17.7 12.6 H14.5"/></g></svg><span style="display:block;font-size:27px;line-height:22px;letter-spacing:0.3px;-webkit-text-stroke:0.3px currentColor">V</span></div>
<svg style="left:390px;top:390px;" width="28" height="30" viewBox="0 0 28 30"><g fill="none" stroke="#CED0D6" stroke-width="2.2" stroke-linejoin="round"><rect x="1.5" y="4.5" width="24" height="24" rx="3"/><rect x="8" y="1.5" width="11" height="5" rx="1.5" fill="#27282C"/><path d="M7 12.5 H20 M7 17.5 H20 M7 22.5 H20"/></g></svg>
<div class="t" style="left:430px;top:443.8px;font-size:27px;font-weight:400;color:#DCDEE3;letter-spacing:0.3px;">Paste from History...</div>
<div class="a" style="right:1566.5px;top:445px;height:22px;display:flex;gap:3px;align-items:center;color:#868A91;white-space:pre;will-change:transform"><svg style="position:static;display:block" width="24" height="22" viewBox="0 0 24 22"><path d="M12 1.5 L22 11.5 H16.5 V20 H7.5 V11.5 H2 Z" fill="none" stroke="#868A91" stroke-width="2" stroke-linejoin="miter"/></svg><svg style="position:static;display:block" width="22" height="22" viewBox="0 0 22 22"><g fill="none" stroke="#868A91" stroke-width="2.1"><path d="M7.5 7 H14.5 V14 H7.5 Z"/><path d="M7.5 7 V5.2 A3.2 3.2 0 1 0 4.3 8.4 H7.5"/><path d="M14.5 7 V5.2 A3.2 3.2 0 1 1 17.7 8.4 H14.5"/><path d="M7.5 14 V15.8 A3.2 3.2 0 1 1 4.3 12.6 H7.5"/><path d="M14.5 14 V15.8 A3.2 3.2 0 1 0 17.7 12.6 H14.5"/></g></svg><span style="display:block;font-size:27px;line-height:22px;letter-spacing:0.3px;-webkit-text-stroke:0.3px currentColor">V</span></div>
<div class="a" style="left:380px;top:490px;width:458px;height:2px;background:#35373B"></div>
<div class="t" style="left:430px;top:513.8px;font-size:27px;font-weight:400;color:#DCDEE3;letter-spacing:0.3px;">Find Usages</div>
<div class="a" style="right:1566.5px;top:515px;height:22px;display:flex;gap:3px;align-items:center;color:#868A91;white-space:pre;will-change:transform"><svg style="position:static;display:block" width="24" height="22" viewBox="0 0 24 22"><path d="M1.5 3 H8 L15.5 19 H22.5 M14 3 H22.5" fill="none" stroke="#868A91" stroke-width="2.1"/></svg><span style="display:block;font-size:27px;line-height:22px;letter-spacing:0.3px;-webkit-text-stroke:0.3px currentColor">F7</span></div>
<div class="t" style="left:430px;top:565.8px;font-size:27px;font-weight:400;color:#DCDEE3;letter-spacing:0.3px;">Inspect Code...</div>
<div class="a" style="left:380px;top:612px;width:458px;height:2px;background:#35373B"></div>
<div class="t" style="left:430px;top:635.8px;font-size:27px;font-weight:400;color:#DCDEE3;letter-spacing:0.3px;">Rename...</div>
<div class="a" style="right:1566.5px;top:637px;height:22px;display:flex;gap:3px;align-items:center;color:#868A91;white-space:pre;will-change:transform"><svg style="position:static;display:block" width="24" height="22" viewBox="0 0 24 22"><path d="M12 1.5 L22 11.5 H16.5 V20 H7.5 V11.5 H2 Z" fill="none" stroke="#868A91" stroke-width="2" stroke-linejoin="miter"/></svg><span style="display:block;font-size:27px;line-height:22px;letter-spacing:0.3px;-webkit-text-stroke:0.3px currentColor">F6</span></div>
<div class="t" style="left:430px;top:687.8px;font-size:27px;font-weight:400;color:#DCDEE3;letter-spacing:0.3px;">Refactor</div>
<svg style="left:811px;top:693.5px;" width="10" height="16" viewBox="0 0 10 16"><path d="M1.5 1 L8.5 8.0 L1.5 15" fill="none" stroke="#DCDEE3" stroke-width="2.0" stroke-linecap="round" stroke-linejoin="round"/></svg>
<div class="a" style="left:380px;top:734px;width:458px;height:2px;background:#35373B"></div>
<div class="t" style="left:430px;top:757.8px;font-size:27px;font-weight:400;color:#DCDEE3;letter-spacing:0.3px;">Bookmarks</div>
<svg style="left:811px;top:763.5px;" width="10" height="16" viewBox="0 0 10 16"><path d="M1.5 1 L8.5 8.0 L1.5 15" fill="none" stroke="#CED0D6" stroke-width="2.0" stroke-linecap="round" stroke-linejoin="round"/></svg>
<div class="a" style="left:380px;top:804px;width:458px;height:2px;background:#35373B"></div>
<div class="t" style="left:430px;top:827.8px;font-size:27px;font-weight:400;color:#DCDEE3;letter-spacing:0.3px;">Reformat Code</div>
<div class="a" style="right:1566.5px;top:829px;height:22px;display:flex;gap:3px;align-items:center;color:#868A91;white-space:pre;will-change:transform"><svg style="position:static;display:block" width="24" height="22" viewBox="0 0 24 22"><path d="M1.5 3 H8 L15.5 19 H22.5 M14 3 H22.5" fill="none" stroke="#868A91" stroke-width="2.1"/></svg><svg style="position:static;display:block" width="22" height="22" viewBox="0 0 22 22"><g fill="none" stroke="#868A91" stroke-width="2.1"><path d="M7.5 7 H14.5 V14 H7.5 Z"/><path d="M7.5 7 V5.2 A3.2 3.2 0 1 0 4.3 8.4 H7.5"/><path d="M14.5 7 V5.2 A3.2 3.2 0 1 1 17.7 8.4 H14.5"/><path d="M7.5 14 V15.8 A3.2 3.2 0 1 1 4.3 12.6 H7.5"/><path d="M14.5 14 V15.8 A3.2 3.2 0 1 0 17.7 12.6 H14.5"/></g></svg><span style="display:block;font-size:27px;line-height:22px;letter-spacing:0.3px;-webkit-text-stroke:0.3px currentColor">L</span></div>
<svg style="left:390px;top:828px;" width="28" height="24" viewBox="0 0 28 24"><g stroke="#CED0D6" stroke-width="2.2"><path d="M1 2 H26 M10 8.5 H26 M10 15 H26 M1 21.5 H26"/></g><path d="M1 7 L7 11.7 L1 16.5 Z" fill="#548AF7"/></svg>
<div class="t" style="left:430px;top:879.8px;font-size:27px;font-weight:400;color:#DCDEE3;letter-spacing:0.3px;">Optimize Imports</div>
<div class="a" style="right:1566.5px;top:881px;height:22px;display:flex;gap:3px;align-items:center;color:#868A91;white-space:pre;will-change:transform"><svg style="position:static;display:block" width="20" height="22" viewBox="0 0 20 22"><path d="M2.5 9.5 L10 2.5 L17.5 9.5" fill="none" stroke="#868A91" stroke-width="2.1"/></svg><svg style="position:static;display:block" width="24" height="22" viewBox="0 0 24 22"><path d="M1.5 3 H8 L15.5 19 H22.5 M14 3 H22.5" fill="none" stroke="#868A91" stroke-width="2.1"/></svg><span style="display:block;font-size:27px;line-height:22px;letter-spacing:0.3px;-webkit-text-stroke:0.3px currentColor">O</span></div>
<div class="t" style="left:430px;top:931.8px;font-size:27px;font-weight:400;color:#DCDEE3;letter-spacing:0.3px;">Delete...</div>
<div class="a" style="right:1569px;top:933px;height:22px;display:flex;gap:3px;align-items:center;color:#868A91;white-space:pre;will-change:transform"><svg style="position:static;display:block" width="30" height="22" viewBox="0 0 30 22"><path d="M2 2.5 H20 L28 11 L20 19.5 H2 Z M8 6.5 L15 15.5 M15 6.5 L8 15.5" fill="none" stroke="#868A91" stroke-width="2"/></svg></div>
<div class="t" style="left:430px;top:983.8px;font-size:27px;font-weight:400;color:#DCDEE3;letter-spacing:0.3px;">Override File Type</div>
<div class="a" style="left:380px;top:1030px;width:458px;height:2px;background:#35373B"></div>
<div class="t" style="left:430px;top:1053.8px;font-size:27px;font-weight:400;color:#DCDEE3;letter-spacing:0.3px;">Run &#x27;chatbot&#x27;</div>
<div class="a" style="right:1566.5px;top:1055px;height:22px;display:flex;gap:3px;align-items:center;color:#868A91;white-space:pre;will-change:transform"><svg style="position:static;display:block" width="20" height="22" viewBox="0 0 20 22"><path d="M2.5 9.5 L10 2.5 L17.5 9.5" fill="none" stroke="#868A91" stroke-width="2.1"/></svg><svg style="position:static;display:block" width="24" height="22" viewBox="0 0 24 22"><path d="M12 1.5 L22 11.5 H16.5 V20 H7.5 V11.5 H2 Z" fill="none" stroke="#868A91" stroke-width="2" stroke-linejoin="miter"/></svg><span style="display:block;font-size:27px;line-height:22px;letter-spacing:0.3px;-webkit-text-stroke:0.3px currentColor">R</span></div>
<svg style="left:390px;top:1052px;" width="30" height="30" viewBox="0 0 30 30"><path d="M4 4.3 Q4 1.6 6.4 2.9 L25 12.6 Q27.2 13.9 25 15.2 L6.4 25 Q4 26.3 4 23.6 Z" fill="#2A3A2B" stroke="#68AC6B" stroke-width="2.2" stroke-linejoin="round"/></svg>
<div class="t" style="left:430px;top:1105.8px;font-size:27px;font-weight:400;color:#DCDEE3;letter-spacing:0.3px;">Debug &#x27;chatbot&#x27;</div>
<div class="a" style="right:1566.5px;top:1107px;height:22px;display:flex;gap:3px;align-items:center;color:#868A91;white-space:pre;will-change:transform"><svg style="position:static;display:block" width="20" height="22" viewBox="0 0 20 22"><path d="M2.5 9.5 L10 2.5 L17.5 9.5" fill="none" stroke="#868A91" stroke-width="2.1"/></svg><svg style="position:static;display:block" width="24" height="22" viewBox="0 0 24 22"><path d="M12 1.5 L22 11.5 H16.5 V20 H7.5 V11.5 H2 Z" fill="none" stroke="#868A91" stroke-width="2" stroke-linejoin="miter"/></svg><span style="display:block;font-size:27px;line-height:22px;letter-spacing:0.3px;-webkit-text-stroke:0.3px currentColor">D</span></div>
<svg style="left:387px;top:1103px;" width="36" height="36" viewBox="0 0 36 36"><g stroke="#68AC6B" stroke-width="2.2" stroke-linecap="round" stroke-linejoin="round"><path d="M12 10.5 A5.3 5.3 0 0 1 22.6 10.5" fill="none"/><path d="M9.7 13.5 Q9.7 10.5 12.7 10.5 H21.9 Q24.9 10.5 24.9 13.5 V20.5 Q24.9 28.5 17.3 28.5 Q9.7 28.5 9.7 20.5 Z" fill="#2A3A2B"/><path d="M3 18.5 H9.7 M24.9 18.5 H31.6 M4.3 10.5 L9.7 13.3 M30.3 10.5 L24.9 13.3 M4.3 26.5 L9.7 23.7 M30.3 26.5 L24.9 23.7" fill="none"/></g></svg>
<div class="t" style="left:430px;top:1157.8px;font-size:27px;font-weight:400;color:#DCDEE3;letter-spacing:0.3px;">More Run/Debug</div>
<svg style="left:811px;top:1163.5px;" width="10" height="16" viewBox="0 0 10 16"><path d="M1.5 1 L8.5 8.0 L1.5 15" fill="none" stroke="#CED0D6" stroke-width="2.0" stroke-linecap="round" stroke-linejoin="round"/></svg>
<div class="a" style="left:380px;top:1204px;width:458px;height:2px;background:#35373B"></div>
<div class="t" style="left:430px;top:1227.8px;font-size:27px;font-weight:400;color:#DCDEE3;letter-spacing:0.3px;">Open in Right Split</div>
<div class="a" style="right:1569px;top:1229px;height:22px;display:flex;gap:3px;align-items:center;color:#868A91;white-space:pre;will-change:transform"><svg style="position:static;display:block" width="24" height="22" viewBox="0 0 24 22"><path d="M12 1.5 L22 11.5 H16.5 V20 H7.5 V11.5 H2 Z" fill="none" stroke="#868A91" stroke-width="2" stroke-linejoin="miter"/></svg><svg style="position:static;display:block" width="26" height="22" viewBox="0 0 26 22"><path d="M23 4 V12.5 H4 M9.5 7.5 L4 12.5 L9.5 17.5" fill="none" stroke="#868A91" stroke-width="2.2"/></svg></div>
<svg style="left:390px;top:1227px;" width="28" height="26" viewBox="0 0 28 26"><g fill="none" stroke="#CED0D6" stroke-width="2.2"><rect x="1.5" y="1.5" width="24" height="23" rx="3.5"/><path d="M13.5 1.5 V24.5"/></g></svg>
<div class="t" style="left:430px;top:1279.8px;font-size:27px;font-weight:400;color:#DCDEE3;letter-spacing:0.3px;">Open In</div>
<svg style="left:811px;top:1285.5px;" width="10" height="16" viewBox="0 0 10 16"><path d="M1.5 1 L8.5 8.0 L1.5 15" fill="none" stroke="#CED0D6" stroke-width="2.0" stroke-linecap="round" stroke-linejoin="round"/></svg>
<div class="a" style="left:380px;top:1326px;width:458px;height:2px;background:#35373B"></div>
<div class="a" style="left:857px;top:661px;width:488px;height:739px;border-radius:13px;background:#060607;box-shadow:0 6px 24px rgba(0,0,0,0.35)"></div>
<div class="a" style="left:858px;top:662px;width:486px;height:737px;border-radius:12px;background:#27282C;border:1px solid #3A3B40"></div>
<div class="t" style="left:930px;top:687.8px;font-size:27px;font-weight:400;color:#DCDEE3;letter-spacing:0.3px;">Rename...</div>
<div class="a" style="right:1082.5px;top:689px;height:22px;display:flex;gap:3px;align-items:center;color:#868A91;white-space:pre;will-change:transform"><svg style="position:static;display:block" width="24" height="22" viewBox="0 0 24 22"><path d="M12 1.5 L22 11.5 H16.5 V20 H7.5 V11.5 H2 Z" fill="none" stroke="#868A91" stroke-width="2" stroke-linejoin="miter"/></svg><span style="display:block;font-size:27px;line-height:22px;letter-spacing:0.3px;-webkit-text-stroke:0.3px currentColor">F6</span></div>
<div class="t" style="left:930px;top:739.8px;font-size:27px;font-weight:400;color:#606368;letter-spacing:0.3px;">Change Signature...</div>
<div class="a" style="right:1082.5px;top:741px;height:22px;display:flex;gap:3px;align-items:center;color:#868A91;white-space:pre;will-change:transform"><svg style="position:static;display:block" width="22" height="22" viewBox="0 0 22 22"><g fill="none" stroke="#868A91" stroke-width="2.1"><path d="M7.5 7 H14.5 V14 H7.5 Z"/><path d="M7.5 7 V5.2 A3.2 3.2 0 1 0 4.3 8.4 H7.5"/><path d="M14.5 7 V5.2 A3.2 3.2 0 1 1 17.7 8.4 H14.5"/><path d="M7.5 14 V15.8 A3.2 3.2 0 1 1 4.3 12.6 H7.5"/><path d="M14.5 14 V15.8 A3.2 3.2 0 1 0 17.7 12.6 H14.5"/></g></svg><span style="display:block;font-size:27px;line-height:22px;letter-spacing:0.3px;-webkit-text-stroke:0.3px currentColor">F6</span></div>
<div class="a" style="left:880px;top:786px;width:442px;height:2px;background:#35373B"></div>
<div class="t" style="left:930px;top:809.8px;font-size:27px;font-weight:400;color:#606368;letter-spacing:0.3px;">Inline...</div>
<div class="a" style="right:1082.5px;top:811px;height:22px;display:flex;gap:3px;align-items:center;color:#868A91;white-space:pre;will-change:transform"><svg style="position:static;display:block" width="24" height="22" viewBox="0 0 24 22"><path d="M1.5 3 H8 L15.5 19 H22.5 M14 3 H22.5" fill="none" stroke="#868A91" stroke-width="2.1"/></svg><svg style="position:static;display:block" width="22" height="22" viewBox="0 0 22 22"><g fill="none" stroke="#868A91" stroke-width="2.1"><path d="M7.5 7 H14.5 V14 H7.5 Z"/><path d="M7.5 7 V5.2 A3.2 3.2 0 1 0 4.3 8.4 H7.5"/><path d="M14.5 7 V5.2 A3.2 3.2 0 1 1 17.7 8.4 H14.5"/><path d="M7.5 14 V15.8 A3.2 3.2 0 1 1 4.3 12.6 H7.5"/><path d="M14.5 14 V15.8 A3.2 3.2 0 1 0 17.7 12.6 H14.5"/></g></svg><span style="display:block;font-size:27px;line-height:22px;letter-spacing:0.3px;-webkit-text-stroke:0.3px currentColor">N</span></div>
<div class="a" style="left:880px;top:856px;width:442px;height:2px;background:#35373B"></div>
<div class="t" style="left:930px;top:879.8px;font-size:27px;font-weight:400;color:#DCDEE3;letter-spacing:0.3px;">Move File...</div>
<div class="a" style="right:1082.5px;top:881px;height:22px;display:flex;gap:3px;align-items:center;color:#868A91;white-space:pre;will-change:transform"><span style="display:block;font-size:27px;line-height:22px;letter-spacing:0.3px;-webkit-text-stroke:0.3px currentColor">F6</span></div>
<div class="t" style="left:930px;top:931.8px;font-size:27px;font-weight:400;color:#DCDEE3;letter-spacing:0.3px;">Copy File...</div>
<div class="a" style="right:1082.5px;top:933px;height:22px;display:flex;gap:3px;align-items:center;color:#868A91;white-space:pre;will-change:transform"><span style="display:block;font-size:27px;line-height:22px;letter-spacing:0.3px;-webkit-text-stroke:0.3px currentColor">F5</span></div>
<div class="t" style="left:930px;top:983.8px;font-size:27px;font-weight:400;color:#DCDEE3;letter-spacing:0.3px;">Safe Delete...</div>
<div class="a" style="right:1085px;top:985px;height:22px;display:flex;gap:3px;align-items:center;color:#868A91;white-space:pre;will-change:transform"><svg style="position:static;display:block" width="22" height="22" viewBox="0 0 22 22"><g fill="none" stroke="#868A91" stroke-width="2.1"><path d="M7.5 7 H14.5 V14 H7.5 Z"/><path d="M7.5 7 V5.2 A3.2 3.2 0 1 0 4.3 8.4 H7.5"/><path d="M14.5 7 V5.2 A3.2 3.2 0 1 1 17.7 8.4 H14.5"/><path d="M7.5 14 V15.8 A3.2 3.2 0 1 1 4.3 12.6 H7.5"/><path d="M14.5 14 V15.8 A3.2 3.2 0 1 0 17.7 12.6 H14.5"/></g></svg><svg style="position:static;display:block" width="30" height="22" viewBox="0 0 30 22"><path d="M2 2.5 H20 L28 11 L20 19.5 H2 Z M8 6.5 L15 15.5 M15 6.5 L8 15.5" fill="none" stroke="#868A91" stroke-width="2"/></svg></div>
<div class="a" style="left:880px;top:1030px;width:442px;height:2px;background:#35373B"></div>
<div class="t" style="left:930px;top:1053.8px;font-size:27px;font-weight:400;color:#606368;letter-spacing:0.3px;">Pull Members Up...</div>
<div class="t" style="left:930px;top:1105.8px;font-size:27px;font-weight:400;color:#606368;letter-spacing:0.3px;">Push Members Down...</div>
<div class="t" style="left:930px;top:1157.8px;font-size:27px;font-weight:400;color:#606368;letter-spacing:0.3px;">Invert Boolean...</div>
<div class="t" style="left:930px;top:1209.8px;font-size:27px;font-weight:400;color:#DCDEE3;letter-spacing:0.3px;">Convert to Python Package</div>
<div class="t" style="left:930px;top:1261.8px;font-size:27px;font-weight:400;color:#606368;letter-spacing:0.3px;">Convert to Python Module</div>
<div class="t" style="left:930px;top:1313.8px;font-size:27px;font-weight:400;color:#DCDEE3;letter-spacing:0.3px;">Convert to Jupyter Notebook</div>
<svg style="left:888px;top:1310px;" width="32" height="32" viewBox="0 0 32 32"><g fill="#CB8B62"><path d="M3.8 12 Q16 -4.4 28.2 12 Q16 4.6 3.8 12 Z"/><path d="M3.8 19.7 Q16 36.7 28.2 19.7 Q16 27.7 3.8 19.7 Z"/></g></svg>
</body></html>
